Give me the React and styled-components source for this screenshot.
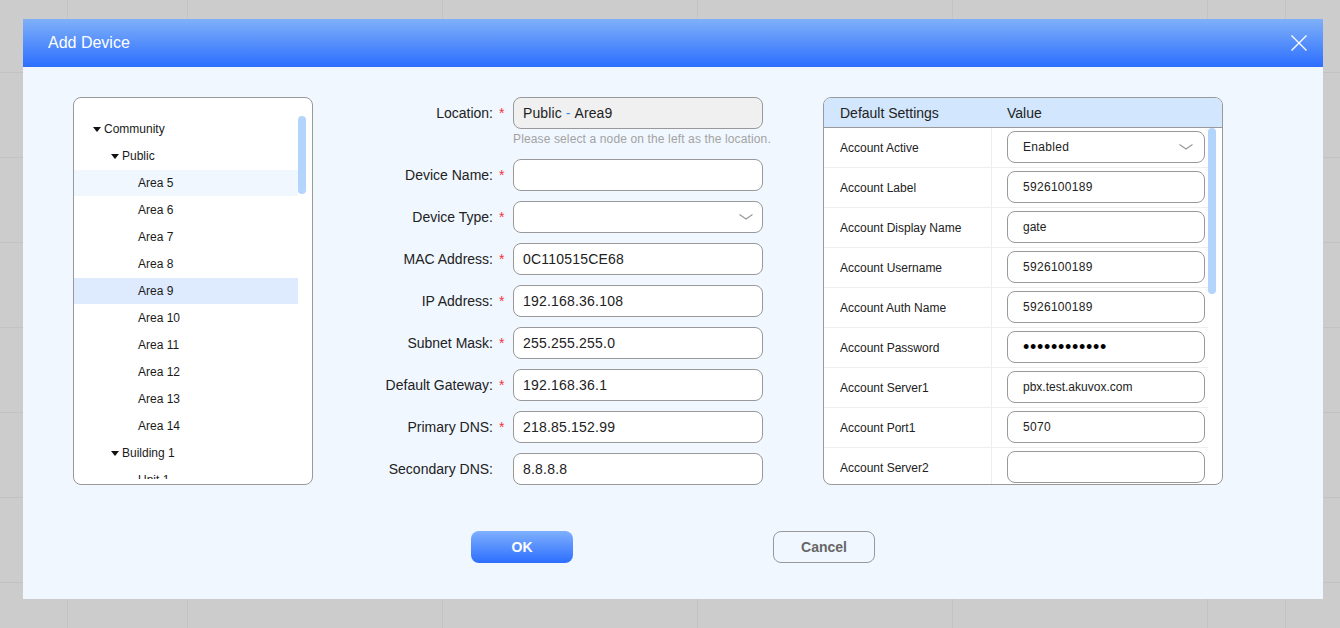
import React from 'react'
import styled, { createGlobalStyle } from 'styled-components'

const Global = createGlobalStyle`
  html, body {
    margin: 0;
    padding: 0;
    height: 100%;
    overflow: hidden;
    background: #cccccc;
  }
  body, input, button {
    font-family: "Liberation Sans", Arial, sans-serif;
  }
`

const Backdrop = styled.div`
  width: 1340px;
  height: 628px;
  position: relative;
  overflow: hidden;
  background-color: #cccccc;
`

const GridTable = styled.div`
  display: grid;
  grid-template-columns: 68px 120px 255px 255px 255px 255px 78px 1fr;
  grid-auto-rows: 85px;
  margin-top: -12px;
  height: 640px;
  overflow: hidden;
`

const GridCell = styled.div`
  box-sizing: border-box;
  border-right: 1px solid #c2c2c2;
  border-bottom: 1px solid #c2c2c2;
  &:nth-child(8n) {
    border-right: 0;
  }
`

const Modal = styled.div`
  position: absolute;
  left: 23px;
  top: 19px;
  width: 1300px;
  height: 580px;
  background: #f0f7ff;
  display: flex;
  flex-direction: column;
`

const Header = styled.div`
  height: 48px;
  flex: none;
  padding: 0 16px 0 25px;
  display: flex;
  align-items: center;
  justify-content: space-between;
  background: linear-gradient(180deg, #7fb0f8 0%, #2c6eff 100%);
  color: #fff;
  font-size: 16px;
`

const CloseIcon = styled.svg`
  width: 16px;
  height: 16px;
  display: block;
`

const Body = styled.div`
  display: flex;
  padding: 30px 0 0 50px;
  height: 388px;
`

const TreePanel = styled.div`
  box-sizing: border-box;
  width: 240px;
  height: 388px;
  flex: none;
  border: 1px solid #999;
  border-radius: 8px;
  background: #fff;
  overflow: hidden;
  position: relative;
`

const TreeScroll = styled.div`
  box-sizing: border-box;
  height: 381px;
  padding-top: 18px;
  overflow: hidden;
`

const Scrollbar = styled.div`
  position: absolute;
  background: #b3d5fc;
  border-radius: 4px;
  width: 8px;
  right: ${p => p.$right}px;
  top: ${p => p.$top}px;
  height: ${p => p.$height}px;
`

const TreeRow = styled.div`
  height: 26px;
  margin-bottom: 1px;
  width: 224px;
  box-sizing: border-box;
  padding-left: ${p => p.$indent}px;
  display: flex;
  align-items: center;
  font-size: 12px;
  color: #1a1a1a;
  background: ${p => (p.$selected ? '#deebfe' : p.$hover ? '#f0f7ff' : 'transparent')};
`

const Caret = styled.span`
  width: 0;
  height: 0;
  border-left: 4px solid transparent;
  border-right: 4px solid transparent;
  border-top: 5px solid #111;
  margin-right: 3px;
  margin-top: 1px;
`

const Form = styled.div`
  width: 450px;
  margin-left: 60px;
  flex: none;
  display: flex;
  flex-direction: column;
  gap: 10px;
`

const FormRow = styled.div`
  display: flex;
  align-items: flex-start;
`

const Label = styled.div`
  width: 120px;
  height: 32px;
  line-height: 32px;
  text-align: right;
  font-size: 14px;
  color: #222;
  flex: none;
`

const Star = styled.span`
  box-sizing: border-box;
  width: 20px;
  height: 32px;
  line-height: 32px;
  flex: none;
  color: #f0353a;
  font-size: 14px;
  padding-left: 6px;
`

const FieldColumn = styled.div`
  display: flex;
  flex-direction: column;
`

const Field = styled.div`
  box-sizing: border-box;
  width: ${p => p.$width || 250}px;
  height: 32px;
  border: 1px solid #999;
  border-radius: 8px;
  background: ${p => (p.$disabled ? '#f0f0f0' : '#fff')};
  padding-left: ${p => p.$pad || 9}px;
  padding-right: ${p => p.$padRight || 9}px;
  display: flex;
  align-items: center;
  font-size: ${p => p.$size || 14}px;
  letter-spacing: ${p => p.$spacing || 0}px;
  color: ${p => (p.$secret ? '#000' : '#222')};
  white-space: nowrap;
`

const Dash = styled.span`
  color: #2a8cf0;
  margin: 0 4px;
`

const Hint = styled.div`
  font-size: 12px;
  color: #a3a3a3;
  margin-top: 3px;
  height: 17px;
  line-height: 14px;
  letter-spacing: 0.13px;
  white-space: nowrap;
`

const Chevron = styled.svg`
  width: 14px;
  height: 6px;
  display: block;
  flex: none;
  margin-left: auto;
`

const Settings = styled.div`
  box-sizing: border-box;
  width: 400px;
  height: 388px;
  flex: none;
  border: 1px solid #999;
  border-radius: 8px;
  background: #fff;
  overflow: hidden;
  position: relative;
`

const SettingsHead = styled.div`
  height: 30px;
  box-sizing: border-box;
  display: grid;
  grid-template-columns: 167px 1fr;
  align-items: center;
  background: #d2e7fd;
  border-bottom: 1px solid #999;
  font-size: 14px;
  color: #222;
  padding-left: 16px;
`

const SettingsRow = styled.div`
  width: 384px;
  height: 40px;
  box-sizing: border-box;
  display: grid;
  grid-template-columns: 168px 1fr;
  border-bottom: 1px solid #eee;
`

const SettingName = styled.div`
  box-sizing: border-box;
  padding-left: 16px;
  border-right: 1px solid #eee;
  display: flex;
  align-items: center;
  font-size: 12px;
  color: #222;
  white-space: nowrap;
`

const SettingValue = styled.div`
  padding: 3px 0 0 15px;
`

const Footer = styled.div`
  display: flex;
  justify-content: center;
  gap: 200px;
  margin-top: 46px;
`

const Button = styled.button`
  box-sizing: border-box;
  width: 102px;
  height: 32px;
  padding: 0;
  border-radius: 8px;
  font-size: 14px;
  font-weight: 700;
  cursor: pointer;
  border: ${p => (p.$primary ? '0' : '1px solid #999')};
  color: ${p => (p.$primary ? '#fff' : '#666')};
  background: ${p => (p.$primary ? 'linear-gradient(180deg, #7fb0fc 0%, #2c6eff 100%)' : 'transparent')};
`

const treeItems = [
  { label: 'Community', indent: 19, caret: true },
  { label: 'Public', indent: 37, caret: true },
  { label: 'Area 5', indent: 64, hover: true },
  { label: 'Area 6', indent: 64 },
  { label: 'Area 7', indent: 64 },
  { label: 'Area 8', indent: 64 },
  { label: 'Area 9', indent: 64, selected: true },
  { label: 'Area 10', indent: 64 },
  { label: 'Area 11', indent: 64 },
  { label: 'Area 12', indent: 64 },
  { label: 'Area 13', indent: 64 },
  { label: 'Area 14', indent: 64 },
  { label: 'Building 1', indent: 37, caret: true },
  { label: 'Unit 1', indent: 64 },
]

const fields = [
  { label: 'Device Name:', required: true, value: '' },
  { label: 'Device Type:', required: true, value: '', select: true },
  { label: 'MAC Address:', required: true, value: '0C110515CE68' },
  { label: 'IP Address:', required: true, value: '192.168.36.108' },
  { label: 'Subnet Mask:', required: true, value: '255.255.255.0' },
  { label: 'Default Gateway:', required: true, value: '192.168.36.1' },
  { label: 'Primary DNS:', required: true, value: '218.85.152.99' },
  { label: 'Secondary DNS:', value: '8.8.8.8' },
]

const settings = [
  { name: 'Account Active', value: 'Enabled', select: true, spacing: 0.3 },
  { name: 'Account Label', value: '5926100189', spacing: 0.3 },
  { name: 'Account Display Name', value: 'gate' },
  { name: 'Account Username', value: '5926100189', spacing: 0.3 },
  { name: 'Account Auth Name', value: '5926100189', spacing: 0.3 },
  { name: 'Account Password', value: '••••••••••••', size: 18, spacing: 0.7, secret: true },
  { name: 'Account Server1', value: 'pbx.test.akuvox.com' },
  { name: 'Account Port1', value: '5070', spacing: 0.3 },
  { name: 'Account Server2', value: '' },
]

const ChevronDown = () => (
  <Chevron viewBox="0 0 14 6">
    <path d="M0.5 0.5 L7 5 L13.5 0.5" fill="none" stroke="#999" strokeWidth="1.2" />
  </Chevron>
)

export default function App() {
  return (
    <Backdrop>
      <Global />
      <GridTable>
        {Array.from({ length: 64 }).map((_, i) => <GridCell key={i} />)}
      </GridTable>
      <Modal>
        <Header>
          Add Device
          <CloseIcon viewBox="0 0 16 16">
            <path d="M0.5 0.5 L15.5 15.5 M15.5 0.5 L0.5 15.5" stroke="#fff" strokeWidth="1.4" fill="none" />
          </CloseIcon>
        </Header>
        <Body>
          <TreePanel>
            <TreeScroll>
              {treeItems.map(item => (
                <TreeRow key={item.label} $indent={item.indent} $selected={item.selected} $hover={item.hover}>
                  {item.caret && <Caret />}
                  {item.label}
                </TreeRow>
              ))}
            </TreeScroll>
            <Scrollbar $right={6} $top={18} $height={78} />
          </TreePanel>
          <Form>
            <FormRow>
              <Label>Location:</Label>
              <Star>*</Star>
              <FieldColumn>
                <Field $disabled $spacing={0.1}>
                  <span>Public<Dash>-</Dash>Area9</span>
                </Field>
                <Hint>Please select a node on the left as the location.</Hint>
              </FieldColumn>
            </FormRow>
            {fields.map(f => (
              <FormRow key={f.label}>
                <Label>{f.label}</Label>
                <Star>{f.required ? '*' : ''}</Star>
                <Field $spacing={0.2}>
                  {f.value}
                  {f.select && <ChevronDown />}
                </Field>
              </FormRow>
            ))}
          </Form>
          <Settings>
            <SettingsHead>
              <span>Default Settings</span>
              <span>Value</span>
            </SettingsHead>
            {settings.map(s => (
              <SettingsRow key={s.name}>
                <SettingName>{s.name}</SettingName>
                <SettingValue>
                  <Field $width={198} $pad={15} $padRight={11} $size={s.size || 12} $spacing={s.spacing} $secret={s.secret}>
                    {s.value}
                    {s.select && <ChevronDown />}
                  </Field>
                </SettingValue>
              </SettingsRow>
            ))}
            <Scrollbar $right={6} $top={30} $height={166} />
          </Settings>
        </Body>
        <Footer>
          <Button $primary>OK</Button>
          <Button>Cancel</Button>
        </Footer>
      </Modal>
    </Backdrop>
  )
}
